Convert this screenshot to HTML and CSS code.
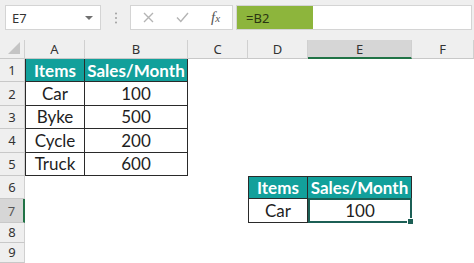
FILE: index.html
```html
<!DOCTYPE html>
<html lang="en">
<head>
    <meta charset="UTF-8">
    <title>Sheet - E7</title>
    <link rel="stylesheet" href="styles.css">
</head>
<body>

<div class="toolbar">
    <div class="namebox"><span>E7</span><span class="caret"></span></div>
    <div class="grip">
        <svg width="4" height="12" viewBox="0 0 4 12"><circle cx="2" cy="1.5" r="1" /><circle cx="2" cy="6" r="1" /><circle cx="2" cy="10.5" r="1" /></svg>
    </div>
    <div class="fxbox">
        <svg width="11" height="11" viewBox="0 0 11 11"><path d="M1 1 L10 10 M10 1 L1 10" /></svg>
        <svg width="13" height="11" viewBox="0 0 13 11"><path d="M1 5.5 L4.8 9.5 L12 1" /></svg>
        <span class="fx"><i>f</i><i class="x">x</i></span>
    </div>
    <div class="formula"><span class="hl">=B2</span></div>
</div>

<div class="sheet">
    <!-- column headers -->
    <div class="corner"><svg width="14" height="14" viewBox="0 0 14 14"><path d="M13 1 L13 13 L1 13 Z" /></svg></div>
    <div class="ch">A</div>
    <div class="ch">B</div>
    <div class="ch">C</div>
    <div class="ch">D</div>
    <div class="ch sel">E</div>
    <div class="ch">F</div>

    <!-- row 1 -->
    <div class="rh">1</div>
    <div class="c t1 th first">Items</div>
    <div class="c t1 th">Sales/Month</div>
    <div class="c"></div><div class="c"></div><div class="c"></div><div class="c"></div>

    <!-- row 2 -->
    <div class="rh">2</div>
    <div class="c t1 first">Car</div>
    <div class="c t1">100</div>
    <div class="c"></div><div class="c"></div><div class="c"></div><div class="c"></div>

    <!-- row 3 -->
    <div class="rh">3</div>
    <div class="c t1 first">Byke</div>
    <div class="c t1">500</div>
    <div class="c"></div><div class="c"></div><div class="c"></div><div class="c"></div>

    <!-- row 4 -->
    <div class="rh">4</div>
    <div class="c t1 first">Cycle</div>
    <div class="c t1">200</div>
    <div class="c"></div><div class="c"></div><div class="c"></div><div class="c"></div>

    <!-- row 5 -->
    <div class="rh">5</div>
    <div class="c t1 first">Truck</div>
    <div class="c t1">600</div>
    <div class="c"></div><div class="c"></div><div class="c"></div><div class="c"></div>

    <!-- row 6 -->
    <div class="rh">6</div>
    <div class="c"></div><div class="c"></div><div class="c"></div>
    <div class="c t2 th first top">Items</div>
    <div class="c t2 th top">Sales/Month</div>
    <div class="c"></div>

    <!-- row 7 -->
    <div class="rh sel">7</div>
    <div class="c"></div><div class="c"></div><div class="c"></div>
    <div class="c t2 first">Car</div>
    <div class="c t2 active">100<span class="handle"></span></div>
    <div class="c"></div>

    <!-- row 8 -->
    <div class="rh">8</div>
    <div class="c"></div><div class="c"></div><div class="c"></div><div class="c"></div><div class="c"></div><div class="c"></div>

    <!-- row 9 -->
    <div class="rh">9</div>
    <div class="c"></div><div class="c"></div><div class="c"></div><div class="c"></div><div class="c"></div><div class="c"></div>
</div>

</body>
</html>
```

FILE: styles.css
```css
body {
    margin: 0;
    width: 474px;
    height: 263px;
    overflow: hidden;
    background-color: #fff;
    font-family: "Lato", "Liberation Sans", sans-serif;
}
.toolbar {
    height: 40px;
    box-sizing: border-box;
    padding: 5px 2px 0 5px;
    background-color: #efefef;
    display: flex;
    align-items: flex-start;
}
.namebox {
    width: 96px;
    height: 25px;
    box-sizing: border-box;
    background-color: #fff;
    border: 1px solid #d4d4d4;
    display: flex;
    align-items: center;
    justify-content: space-between;
    padding: 0 7px 0 6px;
    font: 13px "Noto Sans", sans-serif;
    color: #333;
}
.caret {
    border-left: 4px solid transparent;
    border-right: 4px solid transparent;
    border-top: 4px solid #707070;
}
.grip {
    width: 29px;
    height: 25px;
    display: flex;
    align-items: center;
    justify-content: center;
}
.grip svg { fill: #a0a0a0; }
.fxbox {
    width: 103px;
    height: 25px;
    box-sizing: border-box;
    background-color: #fff;
    border: 1px solid #d4d4d4;
    display: flex;
    align-items: center;
    gap: 22px;
    padding-left: 12px;
}
.fxbox svg path {
    fill: none;
    stroke: #b4b4b4;
    stroke-width: 1.4;
}
.fx {
    font-family: "Liberation Serif", serif;
    font-size: 15px;
    color: #555;
}
.fx .x { font-size: 11px; }
.formula {
    flex: 1;
    height: 25px;
    box-sizing: border-box;
    margin-left: 3px;
    background-color: #fff;
    border: 1px solid #d4d4d4;
    display: flex;
}
.hl {
    width: 76px;
    background-color: #8db53c;
    display: flex;
    align-items: center;
    padding-left: 9px;
    box-sizing: border-box;
    font: 13px "Noto Sans", sans-serif;
    color: #2b3512;
}
.sheet {
    display: grid;
    grid-template-columns: 25px 60px 103px 60px 60px 104px 62px;
    grid-template-rows: 19px repeat(7, 23.4px) 20px 20px;
}
.corner, .ch, .rh {
    background-color: #efefef;
    box-sizing: border-box;
    border-right: 1px solid #d0d0d0;
    border-bottom: 1px solid #c8c8c8;
    display: flex;
    align-items: center;
    justify-content: center;
    font: 13px "Noto Sans", sans-serif;
    color: #333;
}
.corner {
    justify-content: flex-end;
    align-items: flex-end;
    padding: 0 3px 3px 0;
}
.corner svg { fill: #c4c4c4; }
.ch.sel {
    background-color: #d6d6d6;
    border-bottom: 2px solid #217346;
}
.rh.sel {
    background-color: #d6d6d6;
    border-right: 2px solid #217346;
    color: #555;
}
.c {
    box-sizing: border-box;
    display: flex;
    align-items: center;
    justify-content: center;
    font-size: 17px;
    color: #1e1e1e;
    position: relative;
}
.t1, .t2 {
    border-right: 1px solid #2a2a2a;
    border-bottom: 1px solid #2a2a2a;
}
.first { border-left: 1px solid #2a2a2a; }
.top { border-top: 1px solid #2a2a2a; }
.th {
    background-color: #12a09b;
    color: #fff;
    font-weight: bold;
}
.active {
    border: 2px solid #1c5f55;
    margin-top: -1px;
}
.handle {
    position: absolute;
    right: -4px;
    bottom: -4px;
    width: 5px;
    height: 5px;
    background-color: #1c5f55;
    border: 1px solid #fff;
}
```
